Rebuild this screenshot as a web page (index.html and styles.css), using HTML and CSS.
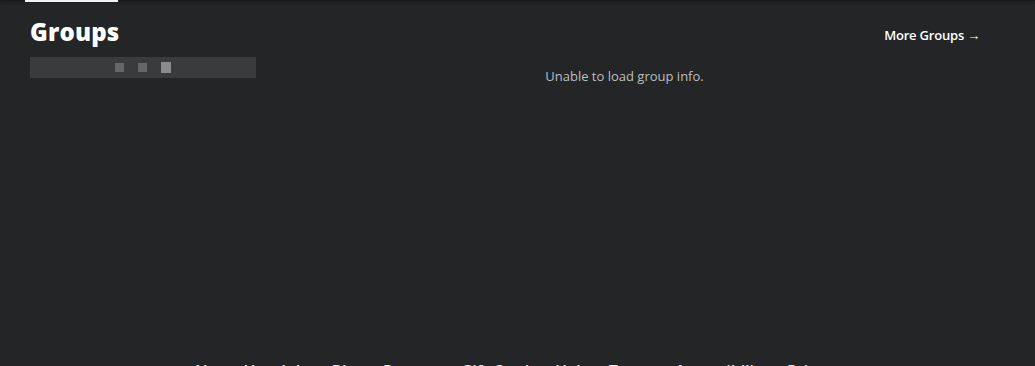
FILE: index.html
```html
<!DOCTYPE html>
<html lang="en">
<head>
  <meta charset="UTF-8">
  <meta name="viewport" content="width=device-width, initial-scale=1.0">
  <title>Groups</title>
  <link rel="stylesheet" href="styles.css">
</head>
<body>
  <div class="top-strip">
    <span class="tab-marker"></span>
  </div>

  <div id="groups-container">
    <div class="groups-header">
      <h1>Groups</h1>
      <a class="more-link" href="#">More Groups <span class="arrow">&rarr;</span></a>
    </div>

    <div class="groups-body">
      <div class="loader-bar">
        <span class="dot"></span>
        <span class="dot"></span>
        <span class="dot big"></span>
      </div>
      <div class="load-error">Unable to load group info.</div>
    </div>
  </div>

  <footer>
    <nav class="footer-links">
      <a href="#">About Us</a>
      <a href="#">Jobs</a>
      <a href="#">Blog</a>
      <a href="#">Parents</a>
      <a href="#">Gift Cards</a>
      <a href="#">Help</a>
      <a href="#">Terms</a>
      <a href="#">Accessibility</a>
      <a href="#">Privacy</a>
    </nav>
  </footer>
</body>
</html>
```

FILE: styles.css
```css
body {
  font-family: "Open Sans", "Noto Sans", Arial, sans-serif;
  background-color: #232527;
  color: #fff;
  margin: 0px;
  overflow: hidden;
}

.top-strip {
  height: 1px;
  background-color: #18191b;
  box-shadow: 0 1px 3px rgba(0, 0, 0, 0.5);
  position: relative;
}

.tab-marker {
  position: absolute;
  left: 25px;
  top: 0;
  width: 93px;
  height: 2px;
  background-color: #f2f2f2;
}

#groups-container {
  height: 359px;
  padding: 0 30px;
}

.groups-header {
  display: flex;
  justify-content: space-between;
  align-items: center;
  padding-top: 16px;
}

h1 {
  margin: 0;
  font-size: 24px;
  font-weight: 800;
  line-height: 30px;
  letter-spacing: 0.2px;
}

.more-link {
  color: #fff;
  text-decoration: none;
  font-size: 13px;
  font-weight: 600;
  letter-spacing: -0.2px;
  margin-right: 25px;
  margin-top: 6px;
}

.arrow {
  font-weight: 400;
}

.groups-body {
  display: flex;
  margin-top: 10px;
}

.loader-bar {
  width: 226px;
  height: 21px;
  background-color: #393b3d;
  display: flex;
  justify-content: center;
  align-items: center;
  gap: 14px;
}

.dot {
  width: 9px;
  height: 9px;
  background-color: #656668;
}

.dot.big {
  width: 10px;
  height: 11px;
  background-color: #8a8b8c;
}

.load-error {
  flex: 1;
  text-align: center;
  font-size: 13px;
  color: #bdbebe;
  padding-top: 10px;
  padding-right: 12px;
}

footer {
  text-align: center;
}

.footer-links {
  display: flex;
  justify-content: center;
  padding-left: 0;
}

.footer-links a {
  color: #e6e6e6;
  text-decoration: none;
  font-size: 16px;
  font-weight: 600;
  padding: 0 9px;
}
```
